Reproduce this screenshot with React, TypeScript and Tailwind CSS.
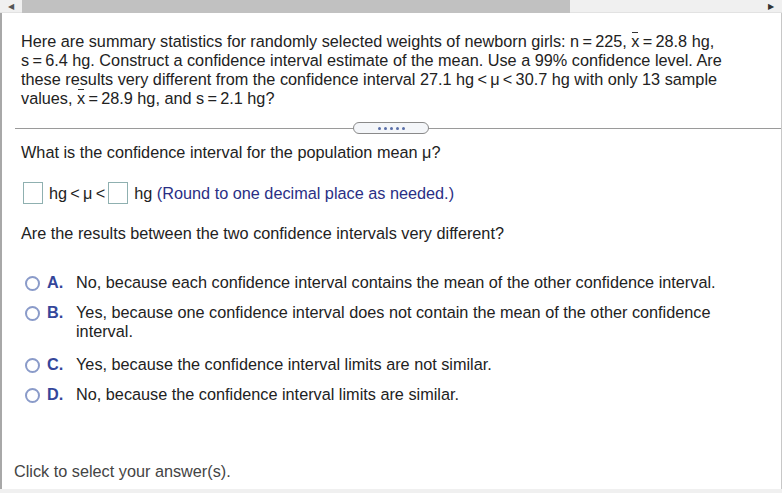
import React from "react";

const Xbar = () => (
  <span className="relative inline-block">
    <span className="absolute left-[1px] right-[1px] top-[0px] border-t border-[#333]" />
    x
  </span>
);

const T = "\u2009";

const Option = ({ letter, children, extra }: { letter: string; children: React.ReactNode; extra?: string }) => (
  <div className={"flex items-start " + (extra ?? "")}>
    <span className="mt-[3px] w-[15px] h-[15px] rounded-full border-2 border-[#8a9bc9] bg-white shrink-0" />
    <span className="ml-[7px] w-[29px] font-bold text-[#34469a] shrink-0">{letter}.</span>
    <span className="text-[#222]">{children}</span>
  </div>
);

export default function App() {
  return (
    <div
      className="w-[782px] h-[493px] bg-white overflow-hidden flex flex-col text-[16.25px] leading-[19px] text-[#222]"
      style={{ fontFamily: '"Liberation Sans", Arial, sans-serif' }}
    >
      {/* horizontal scrollbar */}
      <div className="h-[13px] bg-[#f0f0f0] flex items-center shrink-0 border-b border-[#e2e2e2]">
        <div className="w-[22px] flex justify-center text-[#555] text-[8px]">◀</div>
        <div className="w-[548px] h-[13px] bg-[#c1c1c1]" />
        <div className="flex-1" />
        <div className="w-[22px] flex justify-center text-[#333] text-[8px]">▶</div>
      </div>

      <div className="flex-1 flex flex-col border-l-2 border-l-[#a8a8a8] border-r border-r-[#c8c8c8]">
        <div className="pl-[19px] pr-[20px] pt-[19px] whitespace-nowrap">
          Here are summary statistics for randomly selected weights of newborn girls: n{T}={T}225, <Xbar />{T}={T}28.8 hg,
          <br />
          s{T}={T}6.4 hg. Construct a confidence interval estimate of the mean. Use a 99% confidence level. Are
          <br />
          these results very different from the confidence interval 27.1 hg{T}&lt;{T}μ{T}&lt;{T}30.7 hg with only 13 sample
          <br />
          values, <Xbar />{T}={T}28.9 hg, and s{T}={T}2.1 hg?
        </div>

        <div className="relative mt-[14px] ml-[13px] h-[13px] flex items-center">
          <div className="w-full border-t border-[#9a9a9a]" />
          <div className="absolute left-[338px] top-0 w-[76px] h-[12px] rounded-full border border-[#8a8a8a] bg-[#f4f6f9] flex items-center justify-center gap-[3px]">
            <span className="w-[3px] h-[3px] rounded-full bg-[#5a6fa8]" />
            <span className="w-[3px] h-[3px] rounded-full bg-[#5a6fa8]" />
            <span className="w-[3px] h-[3px] rounded-full bg-[#5a6fa8]" />
            <span className="w-[3px] h-[3px] rounded-full bg-[#5a6fa8]" />
            <span className="w-[3px] h-[3px] rounded-full bg-[#5a6fa8]" />
          </div>
        </div>

        <div className="pl-[19px] pt-[8px]">What is the confidence interval for the population mean μ?</div>

        <div className="pl-[21px] pt-[20px] flex items-center">
          <span className="w-[20px] h-[22px] border border-[#8fb0b0]" />
          <span className="ml-[6px]">hg{T}&lt;{T}μ{T}&lt;</span>
          <span className="ml-[3px] w-[20px] h-[22px] border border-[#8fb0b0]" />
          <span className="ml-[6px]">hg <span className="text-[#2a2f85]">(Round to one decimal place as needed.)</span></span>
        </div>

        <div className="pl-[19px] pt-[20px]">Are the results between the two confidence intervals very different?</div>

        <div className="pl-[23px] pr-[60px] pt-[30px] flex flex-col gap-[11px]">
          <Option letter="A">No, because each confidence interval contains the mean of the other confidence interval.</Option>
          <Option letter="B" extra="mb-[3px]">Yes, because one confidence interval does not contain the mean of the other confidence interval.</Option>
          <Option letter="C">Yes, because the confidence interval limits are not similar.</Option>
          <Option letter="D">No, because the confidence interval limits are similar.</Option>
        </div>

        <div className="flex-1" />
        <div className="pl-[12px] pb-[8px] text-[#444]">Click to select your answer(s).</div>
      </div>
      <div className="h-[4px] bg-[#f0f0f0] shrink-0" />
    </div>
  );
}
